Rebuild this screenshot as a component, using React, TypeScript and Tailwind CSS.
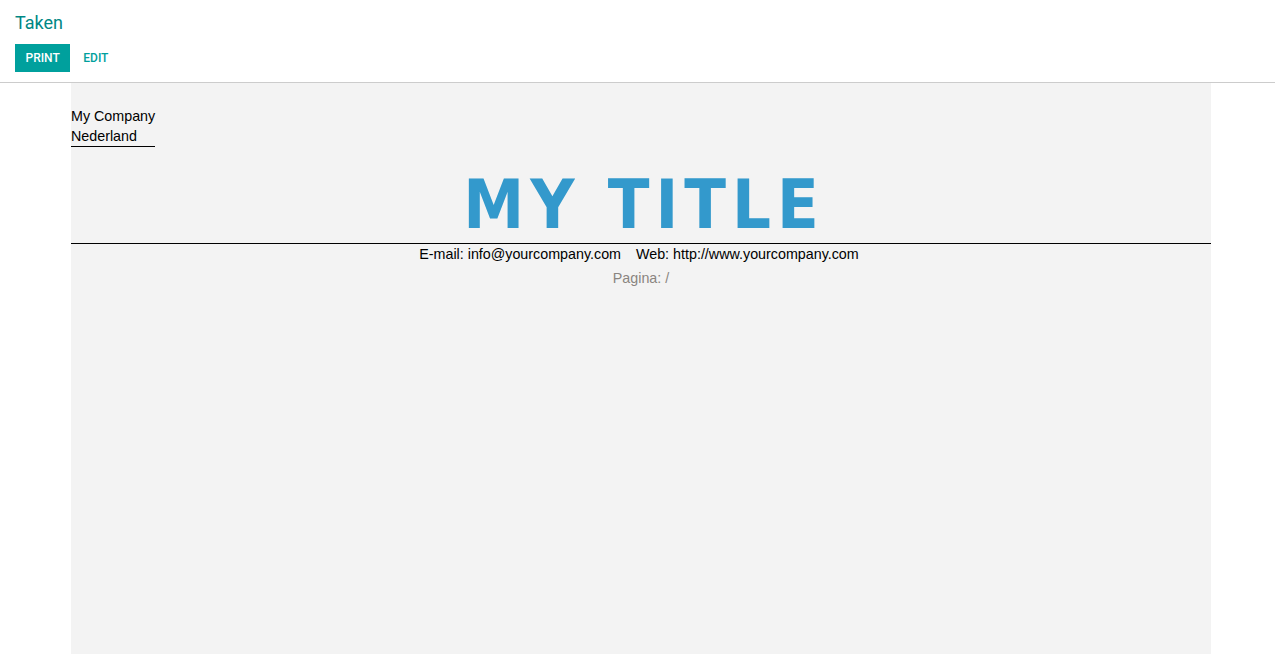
export default function App() {
  return (
    <div className="min-h-screen bg-white flex flex-col" style={{ fontFamily: "Roboto, 'Liberation Sans', sans-serif" }}>
      {/* Control panel */}
      <div className="border-b border-[#cccccc] px-[15px] h-[83px] flex flex-col">
        <div className="text-[18px] text-[#008784] leading-[22px] pt-[12px]">Taken</div>
        <div className="flex items-center gap-[2px] mt-[10px]">
          <button className="bg-[#00a09d] text-white text-[12px] font-medium h-[28px] px-[10.5px] uppercase">Print</button>
          <button className="text-[#00a09d] text-[12px] font-medium h-[28px] px-[11px] uppercase">Edit</button>
        </div>
      </div>

      {/* Report */}
      <div className="flex-1 flex">
        <div className="ml-[71px] w-[1140px] bg-[#f3f3f3] h-[571px]" style={{ fontFamily: "'Liberation Sans', Arial, sans-serif" }}>
          <div className="pt-[23px] text-[14.3px] leading-[20px] text-black">
            <div className="inline-block border-b border-black">
              <div>My Company</div>
              <div>Nederland</div>
            </div>
          </div>
          <div
            className="text-center mt-[20px] h-[76px] leading-[76px] text-[#3399cc] text-[68px] font-bold tracking-[6px] pl-[6px]"
            style={{ fontFamily: "'DejaVu Sans Condensed', 'DejaVu Sans', sans-serif" }}
          >
            MY TITLE
          </div>
          <div className="border-t border-black text-center text-[14.3px] leading-[20px]">
            <div className="text-black pr-[4px]">
              E-mail: info@yourcompany.com <span className="ml-[11px]">Web: http://www.yourcompany.com</span>
            </div>
            <div className="text-[#8a8580] mt-[4px]">Pagina: /</div>
          </div>
        </div>
      </div>
    </div>
  );
}
